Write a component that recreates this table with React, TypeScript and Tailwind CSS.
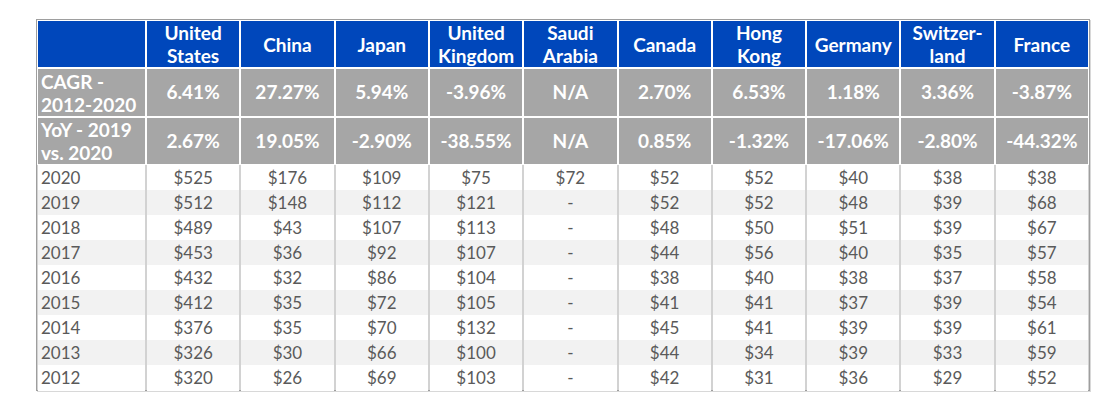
import React from "react";

const countries: string[][] = [
  ["United", "States"],
  ["China"],
  ["Japan"],
  ["United", "Kingdom"],
  ["Saudi", "Arabia"],
  ["Canada"],
  ["Hong", "Kong"],
  ["Germany"],
  ["Switzer-", "land"],
  ["France"],
];

const cagr = ["6.41%", "27.27%", "5.94%", "-3.96%", "N/A", "2.70%", "6.53%", "1.18%", "3.36%", "-3.87%"];
const yoy = ["2.67%", "19.05%", "-2.90%", "-38.55%", "N/A", "0.85%", "-1.32%", "-17.06%", "-2.80%", "-44.32%"];

const rows: [string, string[]][] = [
  ["2020", ["$525", "$176", "$109", "$75", "$72", "$52", "$52", "$40", "$38", "$38"]],
  ["2019", ["$512", "$148", "$112", "$121", "-", "$52", "$52", "$48", "$39", "$68"]],
  ["2018", ["$489", "$43", "$107", "$113", "-", "$48", "$50", "$51", "$39", "$67"]],
  ["2017", ["$453", "$36", "$92", "$107", "-", "$44", "$56", "$40", "$35", "$57"]],
  ["2016", ["$432", "$32", "$86", "$104", "-", "$38", "$40", "$38", "$37", "$58"]],
  ["2015", ["$412", "$35", "$72", "$105", "-", "$41", "$41", "$37", "$39", "$54"]],
  ["2014", ["$376", "$35", "$70", "$132", "-", "$45", "$41", "$39", "$39", "$61"]],
  ["2013", ["$326", "$30", "$66", "$100", "-", "$44", "$34", "$39", "$33", "$59"]],
  ["2012", ["$320", "$26", "$69", "$103", "-", "$42", "$31", "$36", "$29", "$52"]],
];

const grid = "grid grid-cols-[107px_repeat(10,minmax(0,1fr))] gap-x-[2px]";

export default function App() {
  return (
    <div className="w-[1120px] h-[415px] bg-white pt-[19px] pl-[36px]" style={{ fontFamily: "Lato, 'Open Sans', sans-serif" }}>
      <div className="w-[1054px] border border-[#9e9e9e] bg-white shadow-[1px_1px_0_#d8d8d8]">
        <div className="p-[1px] pb-0">
          {/* header */}
          <div className={`${grid} h-[46px]`}>
            <div className="bg-[#0047bb]" />
            {countries.map((c, i) => (
              <div key={i} className="bg-[#0047bb] flex flex-col items-center justify-center text-white font-bold text-[19px] leading-[23px] text-center">
                {c.map((l, j) => (
                  <span key={j}>{l}</span>
                ))}
              </div>
            ))}
          </div>
          {/* CAGR */}
          <div className={`${grid} h-[47px] mt-[2px]`}>
            <div className="bg-[#a6a6a6] flex flex-col justify-center pl-[3px] text-white font-bold text-[19px] leading-[23px]">
              <span>CAGR -</span>
              <span>2012-2020</span>
            </div>
            {cagr.map((v, i) => (
              <div key={i} className="bg-[#a6a6a6] flex items-center justify-center text-white font-bold text-[19px]">
                {v}
              </div>
            ))}
          </div>
          {/* YoY */}
          <div className={`${grid} h-[46px] mt-[2px]`}>
            <div className="bg-[#a6a6a6] flex flex-col justify-center pl-[3px] text-white font-bold text-[19px] leading-[23px]">
              <span>YoY - 2019</span>
              <span>vs. 2020</span>
            </div>
            {yoy.map((v, i) => (
              <div key={i} className="bg-[#a6a6a6] flex items-center justify-center text-white font-bold text-[19px]">
                {v}
              </div>
            ))}
          </div>
        </div>
        {/* body */}
        <div className="mt-[1px] bg-[#d2d2d2] px-[1px]">
          {rows.map(([year, vals], r) => {
            const bg = r % 2 === 1 ? "bg-[#f2f2f2]" : "bg-white";
            return (
              <div key={year} className={`${grid} h-[25px]`}>
                <div className={`${bg} flex items-center pl-[3px] text-[17px] text-[#5a5a5a]`}>{year}</div>
                {vals.map((v, i) => (
                  <div key={i} className={`${bg} flex items-center justify-center text-[17px] text-[#5a5a5a]`}>
                    {v}
                  </div>
                ))}
              </div>
            );
          })}
        </div>
      </div>
    </div>
  );
}
